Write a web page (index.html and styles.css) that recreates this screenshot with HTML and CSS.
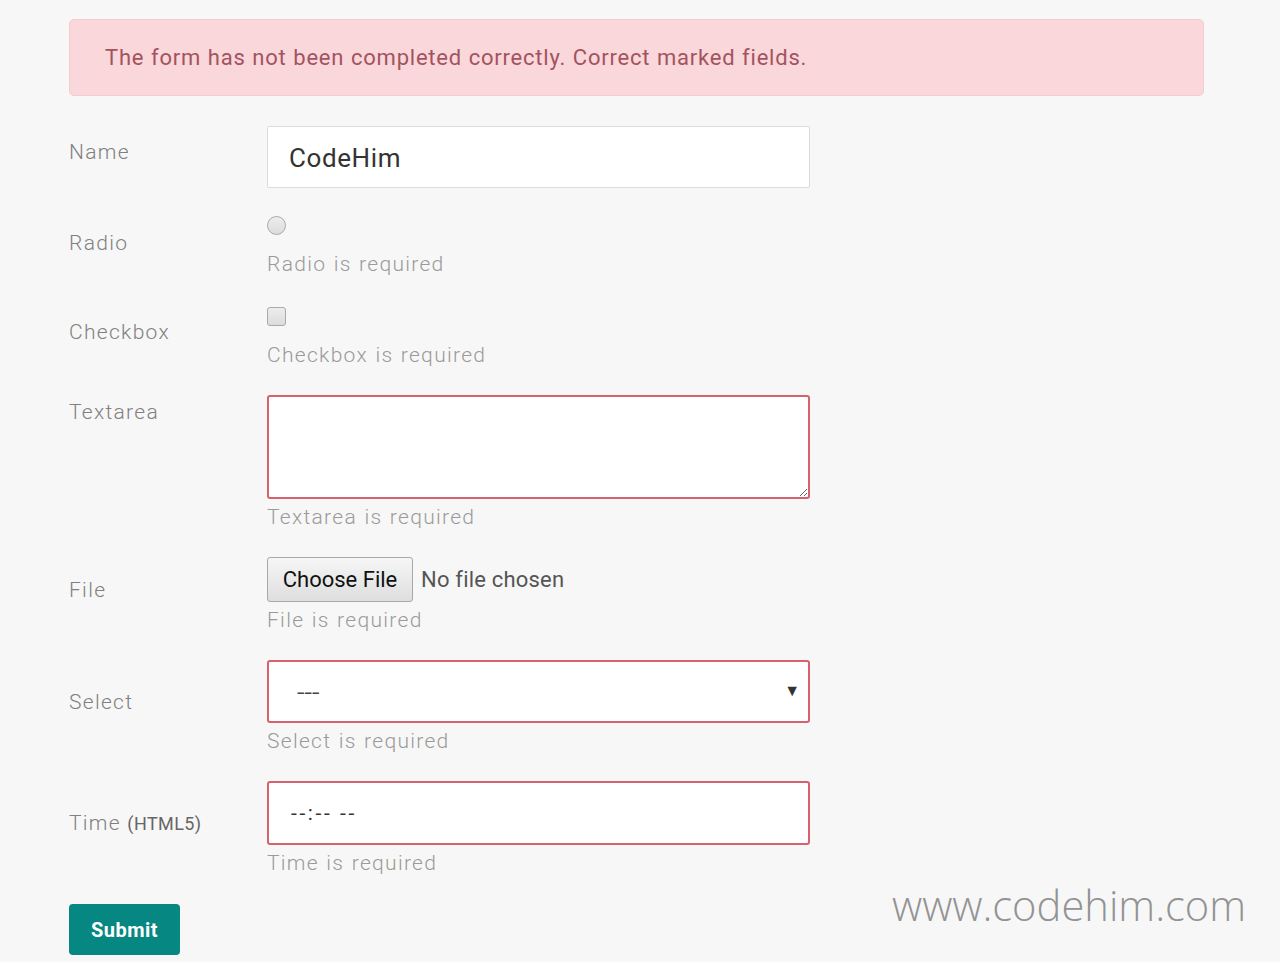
FILE: index.html
```html
<!DOCTYPE html>
<html lang="en">
<head>
<meta charset="utf-8">
<title>Form validation</title>
<link rel="stylesheet" href="styles.css">
</head>
<body>
<div class="page">
  <div class="alert">The form has not been completed correctly. Correct marked fields.</div>
  <form class="form">
    <div class="grid">
      <label class="label">Name</label>
      <div class="control">
        <input class="text-input" type="text" value="CodeHim">
      </div>

      <label class="label">Radio</label>
      <div class="control">
        <div class="check-wrap"><input class="radio" type="radio"></div>
        <div class="help help-check help-gap">Radio is required</div>
      </div>

      <label class="label">Checkbox</label>
      <div class="control">
        <div class="check-wrap"><input class="checkbox" type="checkbox"></div>
        <div class="help help-check">Checkbox is required</div>
      </div>

      <label class="label label-top">Textarea</label>
      <div class="control">
        <textarea class="textarea invalid"></textarea>
        <div class="help">Textarea is required</div>
      </div>

      <label class="label">File</label>
      <div class="control">
        <div class="file-row">
          <button type="button" class="file-btn">Choose File</button>
          <span class="file-name">No file chosen</span>
        </div>
        <div class="help">File is required</div>
      </div>

      <label class="label">Select</label>
      <div class="control">
        <div class="select invalid">
          <span class="select-value">---</span>
          <span class="select-arrow">&#9660;</span>
        </div>
        <div class="help">Select is required</div>
      </div>

      <label class="label">Time <span class="small">(HTML5)</span></label>
      <div class="control">
        <div class="time invalid"><span class="time-value">--:-- --</span></div>
        <div class="help">Time is required</div>
      </div>
    </div>
    <button type="button" class="submit">Submit</button>
  </form>
  <div class="watermark">www.codehim.com</div>
</div>
</body>
</html>
```

FILE: styles.css
```css
html, body {
  margin: 0;
  padding: 0;
  background: #f7f7f7;
}

.page {
  position: relative;
  width: 1280px;
  height: 962px;
  box-sizing: border-box;
  padding: 19px 76px 0 69px;
  font-family: Roboto, "Liberation Sans", sans-serif;
  overflow: hidden;
}

.alert {
  height: 77px;
  box-sizing: border-box;
  display: flex;
  align-items: center;
  padding: 0 35px 0;
  background: #f9d7da;
  border: 1px solid #f4ccd0;
  border-radius: 5px;
  color: #a3535f;
  font-size: 22px;
  letter-spacing: 0.78px;
  word-spacing: 0.5px;
}

.form {
  margin-top: 30px;
}

.grid {
  display: grid;
  grid-template-columns: 198px 543px;
  row-gap: 28px;
  align-items: center;
}

.label {
  color: #808080;
  font-size: 21px;
  font-weight: 300;
  line-height: 24px;
  letter-spacing: 1.3px;
  padding-bottom: 10px;
}

.label-top {
  align-self: start;
  padding-top: 5px;
  padding-bottom: 0;
}

.small {
  font-size: 18px;
  font-weight: 400;
  color: #666;
  letter-spacing: 0.4px;
}

.control {
  display: flex;
  flex-direction: column;
}

.text-input {
  height: 62px;
  box-sizing: border-box;
  margin: 0;
  padding: 2px 21px 0;
  border: 1px solid #dcdcdc;
  border-radius: 2px;
  background: #fff;
  font-family: Roboto, "Liberation Sans", sans-serif;
  font-size: 26px;
  letter-spacing: 0.6px;
  color: #333;
  outline: none;
}

.check-wrap {
  height: 19px;
  display: flex;
}

.radio, .checkbox {
  appearance: none;
  -webkit-appearance: none;
  margin: 0;
  width: 19px;
  height: 19px;
  box-sizing: border-box;
  border: 1px solid #a9a9a9;
  background: linear-gradient(#ededed, #dcdcdc);
}

.radio {
  border-radius: 50%;
}

.checkbox {
  border-radius: 3px;
}

.help {
  margin-top: 6px;
  color: #9a9a9a;
  font-size: 21px;
  font-weight: 300;
  line-height: 24px;
  letter-spacing: 1.3px;
  word-spacing: 1px;
}

.help-check {
  margin-top: 17px;
}

.help-gap {
  margin-bottom: 3px;
}

.invalid {
  border: 2px solid #d9606d;
  border-radius: 3px;
  background: #fff;
}

.textarea {
  display: block;
  height: 104px;
  box-sizing: border-box;
  margin: 0;
  resize: vertical;
  outline: none;
}

.file-row {
  display: flex;
  align-items: center;
  height: 45px;
}

.file-btn {
  height: 45px;
  width: 146px;
  box-sizing: border-box;
  margin: 0;
  padding: 0;
  border: 1px solid #a8a8a8;
  border-radius: 3px;
  background: linear-gradient(#f6f6f6, #dedede);
  font-family: Roboto, "Liberation Sans", sans-serif;
  font-size: 22px;
  color: #111;
}

.file-name {
  margin-left: 8px;
  font-size: 22px;
  letter-spacing: 0.2px;
  color: #555;
}

.select {
  height: 63px;
  box-sizing: border-box;
  display: flex;
  align-items: center;
  justify-content: space-between;
  padding: 0 8px 0 28px;
}

.select-value {
  font-size: 20px;
  color: #444;
  letter-spacing: 0;
  transform: scaleX(1.35);
  transform-origin: left center;
}

.select-arrow {
  font-size: 16px;
  color: #333;
  margin-top: -2px;
}

.time {
  height: 64px;
  box-sizing: border-box;
  display: flex;
  align-items: center;
  padding: 0 22px;
}

.time-value {
  font-size: 21px;
  color: #333;
  letter-spacing: 2.6px;
}

.submit {
  display: block;
  margin-top: 29px;
  width: 111px;
  height: 51px;
  border: 0;
  border-radius: 4px;
  background: #078781;
  color: #fff;
  font-family: Roboto, "Liberation Sans", sans-serif;
  font-size: 20px;
  font-weight: 700;
  letter-spacing: 0.5px;
}

.watermark {
  position: absolute;
  left: 892px;
  top: 876px;
  font-family: "Open Sans", sans-serif;
  font-weight: 300;
  font-size: 41.7px;
  color: #939393;
  letter-spacing: 0;
}
```
